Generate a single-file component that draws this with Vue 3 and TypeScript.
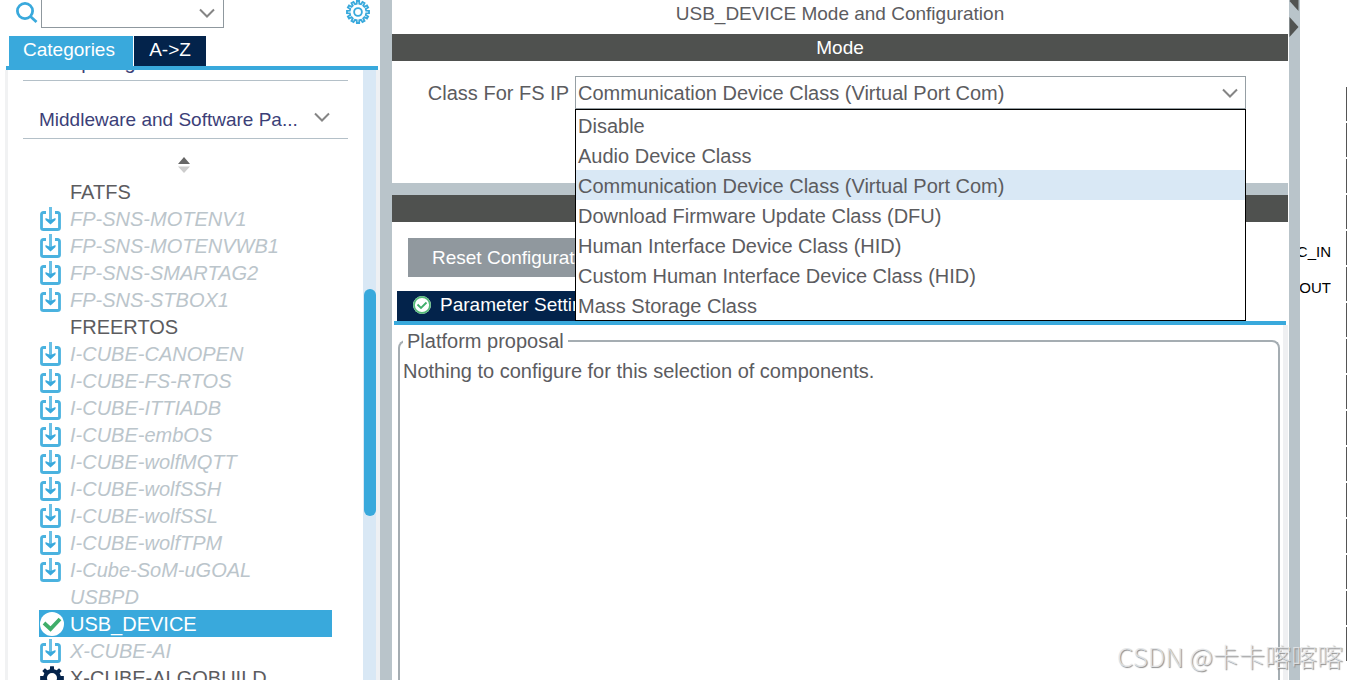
<script setup lang="ts">
import { ref } from 'vue'

type IconKind = 'install' | 'check' | 'gear' | 'none'

interface TreeItem {
  name: string
  icon: IconKind
  muted: boolean
}

const items: TreeItem[] = [
  { name: 'FATFS', icon: 'none', muted: false },
  { name: 'FP-SNS-MOTENV1', icon: 'install', muted: true },
  { name: 'FP-SNS-MOTENVWB1', icon: 'install', muted: true },
  { name: 'FP-SNS-SMARTAG2', icon: 'install', muted: true },
  { name: 'FP-SNS-STBOX1', icon: 'install', muted: true },
  { name: 'FREERTOS', icon: 'none', muted: false },
  { name: 'I-CUBE-CANOPEN', icon: 'install', muted: true },
  { name: 'I-CUBE-FS-RTOS', icon: 'install', muted: true },
  { name: 'I-CUBE-ITTIADB', icon: 'install', muted: true },
  { name: 'I-CUBE-embOS', icon: 'install', muted: true },
  { name: 'I-CUBE-wolfMQTT', icon: 'install', muted: true },
  { name: 'I-CUBE-wolfSSH', icon: 'install', muted: true },
  { name: 'I-CUBE-wolfSSL', icon: 'install', muted: true },
  { name: 'I-CUBE-wolfTPM', icon: 'install', muted: true },
  { name: 'I-Cube-SoM-uGOAL', icon: 'install', muted: true },
  { name: 'USBPD', icon: 'none', muted: true },
  { name: 'USB_DEVICE', icon: 'check', muted: false },
  { name: 'X-CUBE-AI', icon: 'install', muted: true },
  { name: 'X-CUBE-ALGOBUILD', icon: 'gear', muted: false },
]

const classes: string[] = [
  'Disable',
  'Audio Device Class',
  'Communication Device Class (Virtual Port Com)',
  'Download Firmware Update Class (DFU)',
  'Human Interface Device Class (HID)',
  'Custom Human Interface Device Class (HID)',
  'Mass Storage Class',
]

const search = ref('')
const selectedItem = ref('USB_DEVICE')
const usbClass = ref(classes[2])

function gearPath(c: number, teeth: number, outer: number, inner: number): string {
  const step = (Math.PI * 2) / teeth
  const offsets: [number, number][] = [[-0.3, inner], [-0.2, outer], [0.2, outer], [0.3, inner]]
  const points: string[] = []
  for (let i = 0; i < teeth; i++) {
    for (const [o, r] of offsets) {
      const a = (i + o) * step - Math.PI / 2
      points.push(`${(c + r * Math.cos(a)).toFixed(2)} ${(c + r * Math.sin(a)).toFixed(2)}`)
    }
  }
  return `M${points.join('L')}Z`
}

const settingsGear = gearPath(13, 12, 12, 9)
const solidGear = gearPath(12, 8, 12, 9) + 'M12 7a5 5 0 1 0 0 10a5 5 0 1 0 0-10Z'
</script>

<template>
  <div class="app">
    <aside class="sidebar">
      <div class="search-row">
        <svg class="search-icon" viewBox="0 0 22 24" aria-hidden="true">
          <circle cx="9" cy="11" r="7.6" />
          <path d="M14.5 16.5L20.5 22" />
        </svg>
        <div class="search-box">
          <input v-model="search" type="text" aria-label="Search" />
          <button type="button" aria-label="Search history">
            <svg class="chevron" viewBox="0 0 16 10"><path d="M1 1.5L8 8.5L15 1.5" /></svg>
          </button>
        </div>
        <button class="settings" type="button" aria-label="Settings">
          <svg viewBox="0 0 26 26">
            <path :d="settingsGear" />
            <circle cx="13" cy="13" r="4.2" />
          </svg>
        </button>
      </div>

      <nav class="tabs">
        <button class="tab active" type="button">Categories</button>
        <button class="tab" type="button">A-&gt;Z</button>
      </nav>

      <div class="tree-area">
        <div class="tree">
          <button class="category clipped" type="button"><span>Computing</span></button>
          <button class="category" type="button">
            <span>Middleware and Software Pa...</span>
            <svg class="chevron" viewBox="0 0 16 10"><path d="M1 1.5L8 8.5L15 1.5" /></svg>
          </button>
          <button class="sorter" type="button" aria-label="Sort">
            <svg viewBox="0 0 12 16">
              <path d="M0 7L6 0L12 7Z" fill="#666" />
              <path d="M0 9.500L6 16L12 9.500Z" fill="#ccc" />
            </svg>
          </button>
          <ul class="items">
            <li v-for="item in items" :key="item.name">
              <button
                type="button"
                class="item"
                :class="{ muted: item.muted, selected: item.name === selectedItem }"
                @click="selectedItem = item.name"
              >
                <span class="item-icon">
                  <svg v-if="item.icon === 'install'" class="install" viewBox="0 0 21 24">
                    <path class="box" d="M6 5.500H3.500Q1.500 5.500 1.500 7.500V21Q1.500 22.500 3.500 22.500H17.500Q19.500 22.500 19.500 21V7.500Q19.500 5.500 17.500 5.500H15" />
                    <path class="stem" d="M10.500 0V14" />
                    <path class="head" d="M5.500 11L10.500 13L15.500 11V13L10.500 17.500L5.500 13Z" />
                  </svg>
                  <svg v-else-if="item.icon === 'check'" class="round" viewBox="0 0 24 24">
                    <circle cx="12" cy="12" r="12" fill="#fff" />
                    <path d="M4 11L10.500 17L20 7" fill="none" stroke="#3fae6a" stroke-width="3.800" />
                  </svg>
                  <svg v-else-if="item.icon === 'gear'" class="round" viewBox="0 0 24 24">
                    <path :d="solidGear" fill="#03234b" fill-rule="evenodd" />
                  </svg>
                </span>
                <span>{{ item.name }}</span>
              </button>
            </li>
          </ul>
        </div>
        <div class="track"><div class="thumb"></div></div>
      </div>
    </aside>

    <div class="splitter wide"></div>

    <main class="center">
      <h1>USB_DEVICE Mode and Configuration</h1>
      <h2 class="bar">Mode</h2>
      <section class="mode">
        <label for="usb-class">Class For FS IP</label>
        <div class="combo">
          <select id="usb-class" v-model="usbClass">
            <option v-for="c in classes" :key="c">{{ c }}</option>
          </select>
          <svg class="chevron" viewBox="0 0 16 10"><path d="M1 1.5L8 8.5L15 1.5" /></svg>
          <ul class="popup" role="listbox" aria-label="Class For FS IP">
            <li
              v-for="c in classes"
              :key="c"
              role="option"
              :aria-selected="c === usbClass"
              @click="usbClass = c"
            >{{ c }}</li>
          </ul>
        </div>
      </section>
      <div class="divider"></div>
      <div class="bar"></div>
      <section class="config">
        <button class="reset" type="button">Reset Configuration</button>
        <div class="config-tabs">
          <button class="config-tab" type="button">
            <svg viewBox="0 0 18 18" aria-hidden="true">
              <circle cx="9" cy="9" r="9" fill="#fff" />
              <circle cx="9" cy="9" r="8" fill="none" stroke="#55b978" stroke-width="1.800" />
              <path d="M4.500 8.500L8 12L13.500 6.500" fill="none" stroke="#3fae6a" stroke-width="1.800" />
            </svg>
            <span>Parameter Settings</span>
          </button>
        </div>
        <div class="pane">
          <fieldset>
            <legend>Platform proposal</legend>
            <p>Nothing to configure for this selection of components.</p>
          </fieldset>
        </div>
      </section>
    </main>

    <div class="splitter narrow">
      <button type="button" aria-label="Collapse left">
        <svg viewBox="0 0 9 20"><path d="M9 0L0 10L9 20Z" /></svg>
      </button>
      <button type="button" aria-label="Collapse right">
        <svg viewBox="0 0 9 20"><path d="M0 0L9 10L0 20Z" /></svg>
      </button>
    </div>

    <aside class="pinout">
      <div class="pin-names">
        <span>C_IN</span>
        <span>OUT</span>
      </div>
      <div class="pins"><i v-for="n in 16" :key="n"></i></div>
    </aside>

    <div class="watermark">CSDN @卡卡喀喀喀</div>
  </div>
</template>

<style>
body {
  margin: 0;
  overflow: hidden;
}
</style>

<style scoped>
.app {
  position: relative;
  display: flex;
  height: 100vh;
  overflow: hidden;
  background: #fff;
  color: #5c5c5f;
  font-family: "Liberation Sans", Arial, "Noto Sans CJK SC", sans-serif;
  font-size: 20px;
  line-height: 24px;
}
.app * {
  box-sizing: border-box;
}
button,
input,
select {
  font: inherit;
  color: inherit;
  border: 0;
  padding: 0;
  margin: 0;
  background: none;
  border-radius: 0;
}
svg {
  display: block;
}
ul,
h1,
h2,
p {
  margin: 0;
  padding: 0;
  list-style: none;
  font-weight: normal;
}
.chevron {
  width: 16px;
  height: 10px;
  fill: none;
  stroke: #858585;
  stroke-width: 2;
}

.sidebar {
  display: flex;
  flex-direction: column;
  flex: 0 0 380px;
  min-width: 0;
}
.search-row {
  display: flex;
  align-items: flex-start;
  flex: 0 0 36px;
  padding: 0 9px 0 16px;
}
.search-icon {
  width: 22px;
  height: 24px;
  margin-right: 3px;
  fill: none;
  stroke: #39a9dc;
  stroke-width: 2.8;
}
.search-box {
  display: flex;
  width: 183px;
  height: 28px;
  border: 1px solid #8f989e;
  border-top: 0;
}
.search-box input {
  flex: 1;
  min-width: 0;
  outline: 0;
  padding: 0 4px;
}
.search-box button {
  width: 24px;
  padding-bottom: 2px;
}
.settings {
  margin-left: auto;
}
.settings svg {
  width: 26px;
  height: 24px;
  fill: none;
  stroke: #39a9dc;
  stroke-width: 2;
}
.tabs {
  display: flex;
  gap: 1px;
  flex: 0 0 34px;
  margin: 0 2px 0 6px;
  padding-left: 3px;
  border-bottom: 4px solid #39a9dc;
}
.tab {
  width: 72px;
  padding-bottom: 2px;
  background: #03234b;
  color: #fff;
  font-size: 19px;
}
.tab.active {
  width: 124px;
  padding-right: 4px;
  background: #39a9dc;
}
.tree-area {
  display: flex;
  flex: 1;
  min-height: 0;
  margin-left: 5px;
  border-left: 3px solid #f1f2f3;
  border-right: 4px solid #eef0f3;
}
.tree {
  flex: 1;
  min-width: 0;
  overflow: hidden;
  padding: 0 15px;
}
.category {
  display: flex;
  align-items: flex-end;
  justify-content: space-between;
  width: 100%;
  height: 58px;
  padding: 0 18px 6px 16px;
  border-bottom: 1px solid #b4c0c8;
  color: #3c3f78;
  font-size: 19px;
  white-space: nowrap;
}
.category.clipped {
  height: 11px;
  overflow: hidden;
  font-size: 20px;
}
.category .chevron {
  margin-bottom: 10px;
}
.sorter {
  display: flex;
  align-items: center;
  justify-content: center;
  width: 100%;
  height: 39px;
  padding: 12px 4px 0 0;
}
.sorter svg {
  width: 12px;
  height: 16px;
}
.items {
  padding: 0 16px;
}
.item {
  display: flex;
  align-items: center;
  width: 100%;
  height: 27px;
  text-align: left;
  white-space: nowrap;
}
.item.muted {
  color: #bbc5cb;
  font-style: italic;
}
.item.selected {
  background: #39a9dc;
  color: #fff;
}
.item-icon {
  flex: 0 0 31px;
  padding-left: 1px;
}
.install {
  width: 21px;
  height: 24px;
  fill: none;
  stroke: #4ab2df;
}
.install .box {
  stroke-width: 2.8;
}
.install .stem {
  stroke: #6ac0e6;
  stroke-width: 3;
}
.install .head {
  fill: #39a9dc;
  stroke: none;
}
.round {
  width: 24px;
  height: 24px;
}
.track {
  flex: 0 0 13px;
  padding: 219px 0 0 1px;
  background: #d9e8f5;
}
.thumb {
  height: 227px;
  border-radius: 6px;
  background: #39a9dc;
}

.splitter {
  background: #b9c4ca;
}
.wide {
  flex: 0 0 12px;
}
.narrow {
  display: flex;
  flex-direction: column;
  gap: 6px;
  flex: 0 0 11px;
  margin-left: 1px;
}
.narrow button {
  width: 10px;
  height: 20px;
}
.narrow button:first-child {
  height: 11px;
  display: flex;
  align-items: flex-end;
}
.narrow svg {
  width: 10px;
  height: 20px;
  flex: none;
  fill: #515351;
}

.center {
  display: flex;
  flex-direction: column;
  flex: 1;
  min-width: 0;
}
h1 {
  flex: 0 0 34px;
  padding-top: 2px;
  text-align: center;
  font-size: 19px;
}
.bar {
  flex: 0 0 27px;
  background: #4f514f;
  color: #fff;
  text-align: center;
  font-size: 19px;
  line-height: 27px;
}
.mode {
  display: flex;
  align-items: flex-start;
  flex: 0 0 122px;
  padding: 15px 42px 0 0;
}
.mode label {
  flex: 0 0 183px;
  padding-right: 6px;
  text-align: right;
  line-height: 34px;
}
.combo {
  position: relative;
  flex: 1;
  min-width: 0;
}
.combo select {
  display: block;
  width: 100%;
  height: 33px;
  padding: 0 30px 0 2px;
  border: 1px solid #969fa4;
  appearance: none;
  outline: 0;
}
.combo .chevron {
  position: absolute;
  right: 8px;
  top: 12px;
  pointer-events: none;
}
.popup {
  position: absolute;
  z-index: 2;
  top: 100%;
  left: 0;
  right: 0;
  border: 1px solid #000;
  background: #fff;
}
.popup li {
  height: 30px;
  padding-left: 2px;
  line-height: 32px;
  cursor: default;
}
.popup li[aria-selected="true"] {
  background: #d9e8f5;
}
.divider {
  flex: 0 0 12px;
  background: #b9c4ca;
}
.config {
  display: flex;
  flex-direction: column;
  flex: 1;
  min-height: 0;
  padding-top: 16px;
}
.reset {
  align-self: flex-start;
  flex: 0 0 39px;
  margin: 0 0 14px 16px;
  padding: 0 24px;
  background: #90989e;
  color: #fff;
  font-size: 19px;
}
.config-tabs {
  flex: 0 0 34px;
  display: flex;
  margin: 0 2px;
  padding-left: 3px;
  border-bottom: 4px solid #39a9dc;
}
.config-tab {
  display: flex;
  align-items: center;
  gap: 9px;
  padding: 0 16px 2px;
  background: #03234b;
  color: #fff;
  font-size: 19px;
}
.config-tab svg {
  width: 18px;
  height: 18px;
}
.pane {
  display: flex;
  flex: 1;
  min-height: 0;
  padding: 4px 3px 0 4px;
  margin-left: 2px;
  border-right: 5px solid #eff0f2;
}
fieldset {
  flex: 1;
  min-width: 0;
  margin: 0;
  padding: 6px 3px;
  border: 2px solid #a5adb2;
  border-bottom: 0;
  border-radius: 8px 8px 0 0;
}
legend {
  padding: 0 4px;
  margin-left: 0;
}

.pinout {
  display: flex;
  flex: 0 0 47px;
  min-width: 0;
  overflow: hidden;
  color: #000;
  font-size: 15px;
}
.pin-names {
  display: flex;
  flex-direction: column;
  align-items: flex-end;
  gap: 12px;
  flex: 0 0 31px;
  min-width: 0;
  padding-top: 240px;
  overflow: hidden;
}
.pins {
  display: flex;
  flex-direction: column;
  gap: 2px;
  flex: 0 0 1px;
  margin-left: auto;
  padding-top: 87px;
}
.pins i {
  flex: 0 0 34px;
  background: #555;
}
.watermark {
  position: absolute;
  right: 4px;
  bottom: 6px;
  color: rgba(228, 230, 232, 0.85);
  font-family: "Noto Sans CJK SC", sans-serif;
  font-weight: 300;
  font-size: 26px;
  line-height: 36px;
  text-shadow: 1px 1px 1px #8c8c8c;
  pointer-events: none;
}
</style>
